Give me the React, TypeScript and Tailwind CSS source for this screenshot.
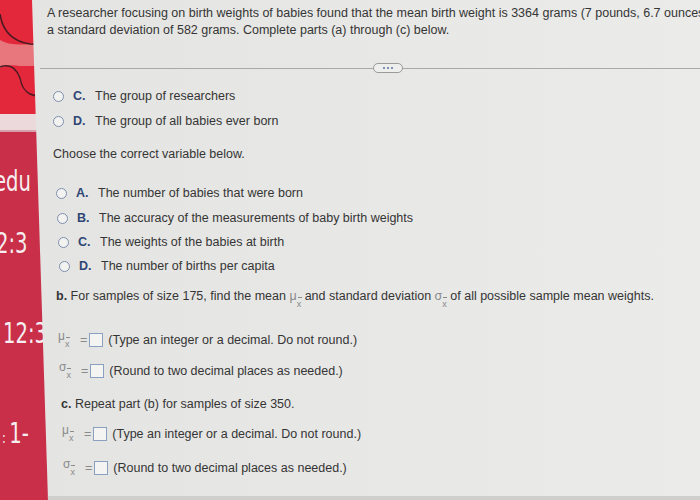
import React from "react"

const font = { fontFamily: '"Liberation Sans", Arial, sans-serif' }
const stripFont = { fontFamily: '"DejaVu Sans", sans-serif' }

function Radio() {
  return (
    <span className="inline-block h-[11px] w-[11px] shrink-0 rounded-full border border-[#7d8fae] bg-[#f2f2f0]" />
  )
}

function Choice({ letter, text, ml, mt }: { letter: string; text: string; ml: string; mt: string }) {
  return (
    <div className={`flex h-[16px] items-center ${ml} ${mt}`}>
      <Radio />
      <span className="ml-[9px] w-[22px] font-bold text-[#2f4674]">{letter}.</span>
      <span>{text}</span>
    </div>
  )
}

function XBar() {
  return (
    <span className="relative inline-block text-[9px] leading-none">
      <span className="absolute -top-[3px] left-[1px] h-px w-[4px] bg-[#8a8a8a]" />
      x
    </span>
  )
}

function AnswerRow({
  sym,
  hint,
  ml,
  mt,
}: {
  sym: "mu" | "sigma"
  hint: string
  ml: string
  mt: string
}) {
  return (
    <div className={`flex h-[16px] items-center ${ml} ${mt}`}>
      <span className="flex w-[22px] items-start text-[#8a8a8a]">
        <span className="text-[12px]">{sym === "mu" ? "μ" : "σ"}</span>
        <span className="mt-[7px]">
          <XBar />
        </span>
      </span>
      <span className="text-[#8a8a8a]">=</span>
      <span className="ml-[2px] inline-block h-[14px] w-[14px] border border-[#8aa0c0] bg-[#f4f4f2]" />
      <span className="ml-[5px]">{hint}</span>
    </div>
  )
}

function RedStrip() {
  return (
    <div className="h-[500px] w-[48px] shrink-0 overflow-hidden whitespace-nowrap bg-[#c92f49] text-[#f6eef0]">
      <svg width="48" height="132" viewBox="0 0 48 132" className="block">
        <rect x="0" y="0" width="48" height="132" fill="#e3283b" />
        <path d="M0 40 Q10 46 30 44 L48 44 L48 66 L20 66 Q8 64 0 68 Z" fill="#e8767d" />
        <path d="M0 14 Q4 40 30 44 L48 45" fill="none" stroke="#4a1a22" strokeWidth="1.6" />
        <path d="M0 67 Q14 62 20 78 Q22 90 30 94 Q36 97 48 95" fill="none" stroke="#4a1a22" strokeWidth="1.4" />
        <rect x="0" y="114" width="48" height="16" fill="#ebd9db" />
        <rect x="0" y="130" width="48" height="2" fill="#d8a0aa" />
      </svg>
      <div className="mt-[36px] -ml-[6px] text-[28px] leading-none" style={stripFont}>
        <span className="inline-block origin-left scale-x-[0.7]">edu</span>
      </div>
      <div className="mt-[34px] -ml-[4px] text-[28px] leading-none" style={stripFont}>
        <span className="inline-block origin-left scale-x-[0.7]">2:3</span>
      </div>
      <div className="mt-[62px] ml-[3px] text-[28px] leading-none" style={stripFont}>
        <span className="inline-block origin-left scale-x-[0.7]">12:3</span>
      </div>
      <div className="mt-[72px] ml-[2px] text-[28px] leading-none" style={stripFont}>
        <span className="inline-block origin-left scale-x-[0.7]">
          <span className="text-[16px]">: </span>1-
        </span>
      </div>
    </div>
  )
}

export default function App() {
  return (
    <div className="flex h-[500px] w-[700px] overflow-hidden bg-[#c92f49]" style={font}>
      <RedStrip />
      <div className="relative z-10 -ml-[16px] min-w-0 flex-1 overflow-hidden bg-gradient-to-r from-[#e4e4e2] to-[#ebebe9] text-[12.5px] leading-[17px] text-[#353535] [clip-path:polygon(0_0,100%_0,100%_100%,16px_100%)]">
        <div className="ml-[15px] mt-[5px] whitespace-nowrap">
          A researcher focusing on birth weights of babies found that the mean birth weight is 3364 grams (7 pounds, 6.7 ounces) and
        </div>
        <div className="ml-[15px] whitespace-nowrap">
          a standard deviation of 582 grams. Complete parts (a) through (c) below.
        </div>

        <div className="ml-[8px] mt-[24px] flex h-[10px] items-center">
          <div className="h-px flex-1 bg-[#a9a9a9]" />
          <div className="flex h-[10px] w-[30px] items-center justify-center gap-[2px] rounded-full border border-[#9a9a9a] bg-[#eeeeec]">
            <span className="h-[2px] w-[2px] rounded-full bg-[#5870a0]" />
            <span className="h-[2px] w-[2px] rounded-full bg-[#5870a0]" />
            <span className="h-[2px] w-[2px] rounded-full bg-[#5870a0]" />
          </div>
          <div className="h-px w-[297px] bg-[#a9a9a9]" />
        </div>

        <Choice letter="C" text="The group of researchers" ml="ml-[21px]" mt="mt-[15px]" />
        <Choice letter="D" text="The group of all babies ever born" ml="ml-[21px]" mt="mt-[9px]" />

        <div className="ml-[21px] mt-[17px]">Choose the correct variable below.</div>

        <Choice letter="A" text="The number of babies that were born" ml="ml-[24px]" mt="mt-[22px]" />
        <Choice letter="B" text="The accuracy of the measurements of baby birth weights" ml="ml-[25px]" mt="mt-[9px]" />
        <Choice letter="C" text="The weights of the babies at birth" ml="ml-[26px]" mt="mt-[8px]" />
        <Choice letter="D" text="The number of births per capita" ml="ml-[27px]" mt="mt-[8px]" />

        <div className="ml-[24px] mt-[14px] flex items-start whitespace-nowrap">
          <span className="font-bold">b.</span>
          <span>&nbsp;For samples of size 175, find the mean&nbsp;</span>
          <span className="text-[#8a8a8a]">μ</span>
          <span className="mt-[7px] text-[#8a8a8a]">
            <XBar />
          </span>
          <span>&nbsp;and standard deviation&nbsp;</span>
          <span className="text-[#8a8a8a]">σ</span>
          <span className="mt-[7px] text-[#8a8a8a]">
            <XBar />
          </span>
          <span>&nbsp;of all possible sample mean weights.</span>
        </div>

        <AnswerRow sym="mu" hint="(Type an integer or a decimal. Do not round.)" ml="ml-[26px]" mt="mt-[20px]" />
        <AnswerRow sym="sigma" hint="(Round to two decimal places as needed.)" ml="ml-[27px]" mt="mt-[15px]" />

        <div className="ml-[29px] mt-[17px]">
          <span className="font-bold">c.</span> Repeat part (b) for samples of size 350.
        </div>

        <AnswerRow sym="mu" hint="(Type an integer or a decimal. Do not round.)" ml="ml-[30px]" mt="mt-[13px]" />
        <AnswerRow sym="sigma" hint="(Round to two decimal places as needed.)" ml="ml-[31px]" mt="mt-[18px]" />

        <div className="absolute bottom-0 left-0 right-0 h-[4px] bg-[#cfcfcd]" />
      </div>
    </div>
  )
}
